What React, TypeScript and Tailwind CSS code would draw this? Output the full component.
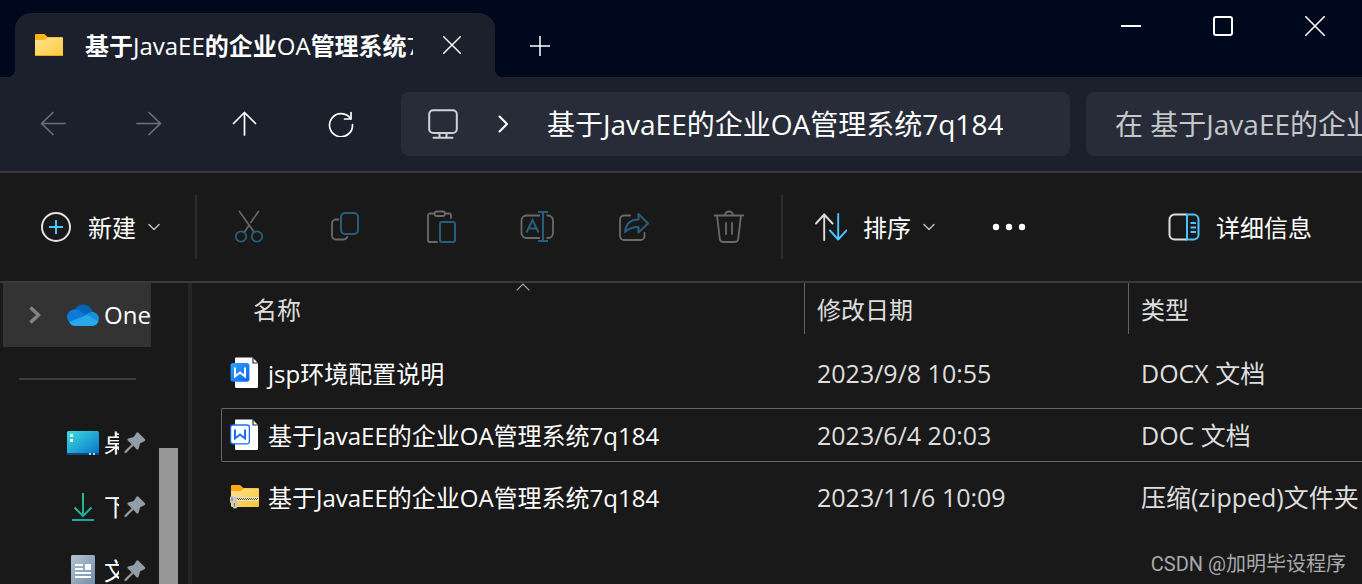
import React from "react";

type IconProps = { className?: string };

const line = {
  fill: "none",
  strokeLinecap: "round" as const,
  strokeLinejoin: "round" as const,
};

function FolderIcon() {
  return (
    <svg width="28" height="22" viewBox="0 0 28 22" aria-hidden="true">
      <defs>
        <linearGradient id="folder" x1="0" y1="0" x2="1" y2="1">
          <stop offset="0" stopColor="#ffe394" />
          <stop offset="1" stopColor="#ffc938" />
        </linearGradient>
      </defs>
      <path d="M1 0h8.500l3 3H27a1 1 0 0 1 1 1v17H0V1a1 1 0 0 1 1-1z" fill="#f9b316" />
      <path d="M0 6h8.500q1.500 0 2.500-1l1.200-1.200H27a1 1 0 0 1 1 1V21a1 1 0 0 1-1 1H1a1 1 0 0 1-1-1z" fill="url(#folder)" />
      <path d="M0 21h28a1 1 0 0 1-1 1H1a1 1 0 0 1-1-1z" fill="#eda81c" />
    </svg>
  );
}

function ZipIcon() {
  return (
    <svg width="30" height="24" viewBox="0 0 30 24" aria-hidden="true">
      <defs>
        <linearGradient id="zip" x1="0" y1="0" x2="1" y2="1">
          <stop offset="0" stopColor="#ffe394" />
          <stop offset="1" stopColor="#fcc22f" />
        </linearGradient>
      </defs>
      <path d="M2 0h8l3.500 3H28a1 1 0 0 1 1 1v17H1V1a1 1 0 0 1 1-1z" fill="#f9a916" />
      <path d="M1 6h9q1.500 0 2.500-1l1.500-1.500h14a1 1 0 0 1 1 1V21a1 1 0 0 1-1 1H2a1 1 0 0 1-1-1z" fill="url(#zip)" />
      <rect x="5" y="12" width="23.500" height="4" fill="#e9dfbd" />
      <path d="M7 13.500h21" stroke="#5f594a" strokeWidth="1" strokeDasharray="1 1" />
      <path d="M8 14.500h20" stroke="#5f594a" strokeWidth="1" strokeDasharray="1 1" />
      <path d="M0 12.500a1 1 0 0 1 1-1h5a1 1 0 0 1 1 1V22a1.500 1.500 0 0 1-1.500 1.500h-1A1.500 1.500 0 0 1 3 22v-4H1a1 1 0 0 1-1-1z" fill="#c9c9c6" />
      <path d="M4.500 18v3.500M2 12.500v3.500" stroke="#7b7b78" strokeWidth="1.200" />
    </svg>
  );
}

function DocIcon({ filled }: { filled: boolean }) {
  return (
    <svg width="30" height="32" viewBox="0 0 30 32" aria-hidden="true">
      <defs>
        <linearGradient id="wps" x1="0" y1="0" x2="1" y2="1">
          <stop offset="0" stopColor="#2fa4ff" />
          <stop offset="1" stopColor="#0a63fb" />
        </linearGradient>
      </defs>
      <path d="M6 .5h16.500L28 6v23.500a1.500 1.500 0 0 1-1.500 1.500H6.500A1.500 1.500 0 0 1 5 29.500v-28A1 1 0 0 1 6 .5z" fill="#fff" />
      <path d="M23 .5V6h5" fill="none" stroke="#26303f" strokeWidth="1.200" />
      <rect x=".6" y="6" width="18.800" height="18.800" rx="2.500" fill={filled ? "url(#wps)" : "#fff"} stroke={filled ? "none" : "#1a6dfb"} strokeWidth="1.300" />
      <path d="M5 10.500v9l5-4 5 4v-9" fill="none" stroke={filled ? "#fff" : "#1a6dfb"} strokeWidth="2" />
    </svg>
  );
}

function CloudIcon() {
  return (
    <svg width="32" height="22" viewBox="0 0 32 22" aria-hidden="true">
      <path d="M7 6.500C9 2.500 12.500.5 16 .5c4.500 0 8.500 3 9.700 7.500L18 13z" fill="#0464b8" />
      <path d="M7.500 5.500c2.500 0 4 .5 6 1.800L22 12.500 2.800 18.500A7 7 0 0 1 0 13C0 9 3.300 5.500 7.500 5.500z" fill="#0a7bd6" />
      <path d="M25.500 8a6.800 6.800 0 0 1 5.800 9.500L19 10.500C20.800 9 23 8 25.500 8z" fill="#1490df" />
      <path d="M2.200 18L20.500 10.700 31.400 17.200A7 7 0 0 1 25.500 22H8c-2.500 0-4.700-1.500-5.800-4z" fill="#28a8ea" />
    </svg>
  );
}

function DesktopIcon() {
  return (
    <svg width="32" height="24" viewBox="0 0 32 24" aria-hidden="true">
      <defs>
        <linearGradient id="desk" x1="0" y1="0" x2="1" y2="1">
          <stop offset="0" stopColor="#38dfe0" />
          <stop offset="1" stopColor="#0b6fc8" />
        </linearGradient>
      </defs>
      <rect width="32" height="24" rx="1.500" fill="url(#desk)" />
      <path d="M0 22h32v.5a1.500 1.500 0 0 1-1.500 1.500h-29A1.500 1.500 0 0 1 0 22.500z" fill="#0b4a78" />
      <path d="M3 3h3v3H3zM3 8h3v3H3z" fill="#fff" />
      <path d="M22 22h2v2h-2zM26 22h2v2h-2z" fill="#b8d4e8" />
    </svg>
  );
}

function DownloadIcon() {
  return (
    <svg width="32" height="28" viewBox="0 0 32 28" aria-hidden="true">
      <defs>
        <linearGradient id="down" gradientUnits="userSpaceOnUse" x1="5" y1="0" x2="22" y2="26">
          <stop offset="0" stopColor="#35c778" />
          <stop offset="1" stopColor="#14a7a0" />
        </linearGradient>
      </defs>
      <path d="M16 0v23M7.500 14.500L16 23l8.500-8.500M5 27h22" fill="none" stroke="url(#down)" strokeWidth="2" />
    </svg>
  );
}

function DocumentsIcon() {
  return (
    <svg width="32" height="32" viewBox="0 0 32 32" aria-hidden="true">
      <defs>
        <linearGradient id="docs" x1="0" y1="0" x2="1" y2="1">
          <stop offset="0" stopColor="#b4c3d3" />
          <stop offset="1" stopColor="#6f8ba8" />
        </linearGradient>
      </defs>
      <rect x="4" width="24" height="32" rx="1.500" fill="url(#docs)" />
      <path d="M8 10h8M8 14h8M8 18h16M8 22h16" stroke="#fff" strokeWidth="2" />
      <rect x="18" y="9" width="6" height="6" fill="#fff" />
    </svg>
  );
}

function PinIcon() {
  return (
    <svg width="22" height="22" viewBox="0 0 22 22" aria-hidden="true">
      <path d="M12.500.8a1.500 1.500 0 0 1 2 0l6 6a1.500 1.500 0 0 1-.3 2.400L16 11.500c-.6 2-.8 4-1.600 5.500-.4.700-1.200.8-1.800.2L9 13.600l-7 7.200-1.600.4.400-1.600L8 12.500 3.800 8.400c-.6-.6-.5-1.500.3-1.800C5.800 5.900 8 5.700 9.800 5z" fill="#939da6" />
      <path d="M8.500 13L1.200 20.300" stroke="#939da6" strokeWidth="2" />
    </svg>
  );
}

function Chevron({ className }: IconProps) {
  return (
    <svg width="12" height="8" viewBox="0 0 12 8" className={className} aria-hidden="true">
      <path d="M1 1.500l5 5 5-5" {...line} stroke="#bdbdbd" strokeWidth="1.500" />
    </svg>
  );
}

function CrossIcon({ size }: { size: number }) {
  return (
    <svg width={size} height={size} viewBox="0 0 20 20" aria-hidden="true">
      <path d="M.8.8l18.400 18.400M19.200.8L.8 19.200" {...line} stroke="#fff" strokeWidth="1.600" />
    </svg>
  );
}

const grey = "#6a6a6a";
const blue = "#285e7c";

const editTools = [
  {
    label: "剪切",
    icon: (
      <>
        <path d="M5.500 1.500L20 22M24.500 1.500L16.700 12.500M14.500 16l-4 6" {...line} stroke={grey} strokeWidth="1.600" />
        <circle cx="7" cy="26.500" r="5.200" {...line} stroke={blue} strokeWidth="1.800" />
        <circle cx="23" cy="26.500" r="5.200" {...line} stroke={blue} strokeWidth="1.800" />
      </>
    ),
  },
  {
    label: "复制",
    icon: (
      <>
        <path d="M8.500 9.500H6a4 4 0 0 0-4 4v12a4 4 0 0 0 4 4h7.500a4 4 0 0 0 3.800-2.700" {...line} stroke={grey} strokeWidth="1.800" />
        <rect x="11" y="3" width="17" height="21" rx="4" {...line} stroke={blue} strokeWidth="2" />
      </>
    ),
  },
  {
    label: "粘贴",
    icon: (
      <>
        <path d="M8 3.500H4a2 2 0 0 0-2 2V30a2 2 0 0 0 2 2h7M19 3.500h4a2 2 0 0 1 2 2V8" {...line} stroke={grey} strokeWidth="1.800" />
        <rect x="8.500" y="1.500" width="10.500" height="4.500" rx="2.200" {...line} stroke={grey} strokeWidth="1.800" />
        <rect x="14" y="12" width="15" height="20" rx="2" {...line} stroke={blue} strokeWidth="2" />
      </>
    ),
  },
  {
    label: "重命名",
    icon: (
      <>
        <path d="M18 5.500H4.500a5 5 0 0 0-5 5V23a5 5 0 0 0 5 5H18M24.500 5.500h1.500a5 5 0 0 1 5 5V23a5 5 0 0 1-5 5h-1.500" fill="none" stroke={grey} strokeWidth="1.800" />
        <path d="M4.500 22.500L10.500 10l6 12.500M6.500 18.500h8M21 2v29M16 2h10M16 31h10" fill="none" stroke={blue} strokeWidth="2" />
      </>
    ),
  },
  {
    label: "共享",
    icon: (
      <>
        <path d="M12 5.500H6a4 4 0 0 0-4 4V26a4 4 0 0 0 4 4h16.500a4 4 0 0 0 4-4v-3" {...line} stroke={grey} strokeWidth="1.800" />
        <path d="M20.500 4l9.500 9.500-9.500 9V17c-6.500 0-10 1.500-13.500 5C7.800 14.500 12 9.500 20.500 9.500z" {...line} stroke={blue} strokeWidth="2" />
      </>
    ),
  },
  {
    label: "删除",
    icon: (
      <>
        <path d="M.8 5.500h28.400M3 5.500l2.800 23.200A3.500 3.500 0 0 0 9.200 32h11.600a3.500 3.500 0 0 0 3.400-3.300L27 5.500M11 5.500a4 4 0 0 1 8 0M12 13v11M18 13v11" {...line} stroke={grey} strokeWidth="1.800" />
      </>
    ),
  },
];

const navTools = [
  { label: "后退", color: "#6c707a", d: "M13 1.500L1.500 12.500 13 23.500M1.500 12.500H25" },
  { label: "前进", color: "#6c707a", d: "M13 1.500l11.500 11L13 23.500M24.500 12.500H1" },
  { label: "上移", color: "#fff", d: "M1.500 12.500L12.500 1.500l11 11M12.500 1.500V24" },
  { label: "刷新", color: "#fff", d: "M23 1.500v6.500h-6.500M22.700 8A11.500 11.500 0 1 0 24.500 13.500" },
];

const quickAccess = [
  { label: "桌", icon: <DesktopIcon /> },
  { label: "下", icon: <DownloadIcon /> },
  { label: "文", icon: <DocumentsIcon /> },
];

const files = [
  { name: "jsp环境配置说明", date: "2023/9/8 10:55", type: "DOCX 文档", icon: <DocIcon filled />, focused: false },
  { name: "基于JavaEE的企业OA管理系统7q184", date: "2023/6/4 20:03", type: "DOC 文档", icon: <DocIcon filled={false} />, focused: true },
  { name: "基于JavaEE的企业OA管理系统7q184", date: "2023/11/6 10:09", type: "压缩(zipped)文件夹", icon: <ZipIcon />, focused: false },
];

function TitleBar() {
  return (
    <header className="flex h-[77px] shrink-0 items-start bg-[#00081e]">
      <div className="relative mt-[13px] ml-[15px] flex h-16 w-[480px] items-center rounded-t-2xl bg-[#1b202c] pl-5">
        <span className="absolute bottom-0 -left-2 size-2 bg-[radial-gradient(circle_at_0_0,#00081e_8px,#1b202c_8px)]" />
        <span className="absolute -right-2 bottom-0 size-2 bg-[radial-gradient(circle_at_100%_0,#00081e_8px,#1b202c_8px)]" />
        <FolderIcon />
        <span className="ml-[22px] w-[328px] overflow-hidden pt-0.5 text-2xl font-bold whitespace-nowrap text-white">
          基于<span className="font-medium">JavaEE</span>的企业<span className="font-medium">OA</span>管理系统
          <span className="font-medium">7</span>
        </span>
        <button aria-label="关闭标签页" className="ml-[23px] flex h-10 w-8 items-center justify-center">
          <CrossIcon size={18} />
        </button>
      </div>
      <button aria-label="新标签页" className="mt-[22px] ml-[21px] flex size-12 items-center justify-center">
        <svg width="20" height="20" viewBox="0 0 20 20" aria-hidden="true">
          <path d="M10 0v20M0 10h20" stroke="#fff" strokeWidth="1.500" />
        </svg>
      </button>
      <div className="ml-auto flex pr-px">
        <button aria-label="最小化" className="flex h-[52px] w-[92px] items-center justify-center">
          <svg width="20" height="20" viewBox="0 0 20 20" aria-hidden="true">
            <path d="M0 10h20" stroke="#fff" strokeWidth="2" />
          </svg>
        </button>
        <button aria-label="最大化" className="flex h-[52px] w-[92px] items-center justify-center">
          <svg width="20" height="20" viewBox="0 0 20 20" aria-hidden="true">
            <rect x="1" y="1" width="18" height="18" rx="2" fill="none" stroke="#fff" strokeWidth="2" />
          </svg>
        </button>
        <button aria-label="关闭" className="flex h-[52px] w-[92px] items-center justify-center">
          <CrossIcon size={20} />
        </button>
      </div>
    </header>
  );
}

function NavBar() {
  return (
    <nav className="flex shrink-0 items-center border-b-2 border-[#3a3a3a] bg-[#1b202c] py-[15px] pl-[5px]">
      {navTools.map((t) => (
        <button key={t.label} aria-label={t.label} className="flex h-16 w-24 shrink-0 items-center justify-center">
          <svg width="26" height="26" viewBox="0 0 26 26" aria-hidden="true">
            <path d={t.d} {...line} stroke={t.color} strokeWidth="1.700" />
          </svg>
        </button>
      ))}
      <div className="ml-3 flex h-16 min-w-0 flex-1 items-center rounded-lg bg-[#272c38] pl-[27px]">
        <svg width="30" height="30" viewBox="0 0 30 30" aria-hidden="true">
          <rect x="1.200" y="1.200" width="27.600" height="22.800" rx="4" {...line} stroke="#d0d2d6" strokeWidth="2" />
          <path d="M11.500 24v4.500M18.500 24v4.500M5.500 28.700h19" {...line} stroke="#d0d2d6" strokeWidth="2" />
        </svg>
        <svg width="10" height="18" viewBox="0 0 10 18" className="ml-10" aria-hidden="true">
          <path d="M1.500 1.500L9 9l-7.500 7.500" {...line} stroke="#fff" strokeWidth="2" />
        </svg>
        <button className="ml-[39px] truncate text-[28px] text-white">基于JavaEE的企业OA管理系统7q184</button>
      </div>
      <input
        type="text"
        aria-label="搜索"
        placeholder="在 基于JavaEE的企业"
        className="ml-4 h-16 w-[276px] shrink-0 rounded-l-lg bg-[#272c38] pl-[29px] text-[28px] text-white outline-none placeholder:text-[#c5c7ca]"
      />
    </nav>
  );
}

function Toolbar() {
  return (
    <div className="flex h-[110px] shrink-0 items-center border-b-2 border-[#3a3a3a] bg-[#191919] text-2xl text-white">
      <button className="flex h-16 w-[195px] shrink-0 items-center pl-10">
        <svg width="32" height="32" viewBox="0 0 32 32" aria-hidden="true">
          <circle cx="16" cy="16" r="14" fill="none" stroke="#e2e2e2" strokeWidth="2" />
          <path d="M16 9v14M9 16h14" stroke="#4cc2ff" strokeWidth="2" />
        </svg>
        <span className="ml-4 pt-0.5">新建</span>
        <Chevron className="ml-3" />
      </button>
      <span className="h-16 w-0.5 bg-[#2c2c2c]" />
      <div className="ml-1 flex">
        {editTools.map((t) => (
          <button key={t.label} aria-label={t.label} disabled className="flex h-16 w-24 items-center justify-center">
            <svg width="30" height="34" viewBox="0 0 30 34" className="overflow-visible" aria-hidden="true">
              {t.icon}
            </svg>
          </button>
        ))}
      </div>
      <span className="ml-1 h-16 w-0.5 bg-[#2c2c2c]" />
      <button className="ml-8 flex h-16 items-center">
        <svg width="32" height="28" viewBox="0 0 32 28" aria-hidden="true">
          <path d="M1 10.500L9.200 1.500l8.300 9M9.200 1.500V27" {...line} stroke="#dedede" strokeWidth="1.900" />
          <path d="M15 17.500l8.200 9 8.300-9M23.200 1v25.500" {...line} stroke="#4cc2ff" strokeWidth="1.900" />
        </svg>
        <span className="ml-4 pt-0.5">排序</span>
        <Chevron className="ml-3" />
      </button>
      <button aria-label="查看更多" className="ml-11 flex h-16 w-[60px] items-center justify-center">
        <svg width="34" height="8" viewBox="0 0 34 8" aria-hidden="true" fill="#fff">
          <circle cx="4" cy="4" r="3.200" />
          <circle cx="17" cy="4" r="3.200" />
          <circle cx="30" cy="4" r="3.200" />
        </svg>
      </button>
      <button className="mr-[50px] ml-auto flex h-16 items-center">
        <svg width="32" height="28" viewBox="0 0 32 28" aria-hidden="true">
          <path d="M19 1.500H6.500a5 5 0 0 0-5 5v15a5 5 0 0 0 5 5H19" fill="none" stroke="#dedede" strokeWidth="2" />
          <path d="M19 1.500h6.500a5 5 0 0 1 5 5v15a5 5 0 0 1-5 5H19zM22.500 10h5.500M22.500 14.500h5.500M22.500 19h5.500" fill="none" stroke="#4cc2ff" strokeWidth="2" />
        </svg>
        <span className="ml-4 pt-0.5">详细信息</span>
      </button>
    </div>
  );
}

function Sidebar() {
  return (
    <aside className="flex w-[192px] shrink-0 overflow-hidden border-r-4 border-[#252525] pl-[3px] text-2xl text-white">
      <div className="w-[148px] shrink-0">
        <button className="flex h-16 w-full items-center overflow-hidden bg-[#333333] pl-[26px]">
          <svg width="12" height="18" viewBox="0 0 12 18" className="shrink-0" aria-hidden="true">
            <path d="M1.500 1.500L9.500 9l-8 7.500" fill="none" stroke="#848484" strokeWidth="3.500" />
          </svg>
          <span className="ml-[26px] shrink-0">
            <CloudIcon />
          </span>
          <span className="ml-[5px]">One</span>
        </button>
        <hr className="mt-[31px] mr-[15px] mb-[31px] ml-4 border-t-2 border-[#3d3d3d]" />
        {quickAccess.map((q) => (
          <button key={q.label} className="flex h-16 w-full items-center pl-16">
            <span className="shrink-0">{q.icon}</span>
            <span className="ml-[5px] w-[15px] shrink-0 overflow-hidden">{q.label}</span>
            <span className="ml-[5px] shrink-0">
              <PinIcon />
            </span>
          </button>
        ))}
      </div>
      <div className="mt-[165px] ml-2 w-[19px] bg-[#969696]" />
    </aside>
  );
}

function FileTable() {
  return (
    <main className="min-w-0 flex-1 overflow-hidden pl-[29px]">
      <table className="w-full table-fixed border-separate border-spacing-0 text-left text-2xl whitespace-nowrap text-[#dedede]">
        <colgroup>
          <col />
          <col className="w-[324px]" />
          <col className="w-[234px]" />
        </colgroup>
        <thead>
          <tr>
            <th className="relative h-[59px] p-0 align-top font-normal">
              <svg width="14" height="8" viewBox="0 0 14 8" className="absolute top-0 left-1/2 ml-[3px]" aria-hidden="true">
                <path d="M.7 7.300L7 1l6.300 6.300" fill="none" stroke="#a8a8a8" strokeWidth="1.200" />
              </svg>
              <div className="flex h-[51px] items-center pt-0.5 pl-8">名称</div>
            </th>
            <th className="h-[59px] p-0 align-top font-normal">
              <div className="flex h-[51px] items-center border-l border-[#636363] pt-0.5 pl-3">修改日期</div>
            </th>
            <th className="h-[59px] p-0 align-top font-normal">
              <div className="flex h-[51px] items-center border-l border-[#636363] pt-0.5 pl-3">类型</div>
            </th>
          </tr>
        </thead>
        <tbody>
          {files.map((f) => {
            const edge = f.focused ? "border-[#666666]" : "border-transparent";
            return (
              <tr key={f.date}>
                <td className="px-0 py-1">
                  <div className={`flex h-[54px] items-center rounded-l-xs border-y border-l pl-2 text-white ${edge}`}>
                    <span className="w-[30px] shrink-0">{f.icon}</span>
                    <span className="ml-2 pt-0.5">{f.name}</span>
                  </div>
                </td>
                <td className="px-0 py-1">
                  <div className={`flex h-[54px] items-center border-y pt-0.5 pl-[13px] text-[25px] ${edge}`}>{f.date}</div>
                </td>
                <td className="px-0 py-1">
                  <div className={`flex h-[54px] items-center border-y pt-0.5 pl-[13px] text-[25px] ${edge}`}>{f.type}</div>
                </td>
              </tr>
            );
          })}
        </tbody>
      </table>
    </main>
  );
}

export default function App() {
  return (
    <div className="relative flex h-screen flex-col overflow-hidden bg-[#191919] font-['Open_Sans','Noto_Sans_CJK_SC',sans-serif]">
      <TitleBar />
      <NavBar />
      <Toolbar />
      <div className="flex min-h-0 flex-1">
        <Sidebar />
        <FileTable />
      </div>
      <div className="absolute right-4 bottom-1 font-[Roboto,'Noto_Sans_CJK_SC',sans-serif] text-xl leading-8 text-[#a9a9a9]">
        CSDN @加明毕设程序
      </div>
    </div>
  );
}
